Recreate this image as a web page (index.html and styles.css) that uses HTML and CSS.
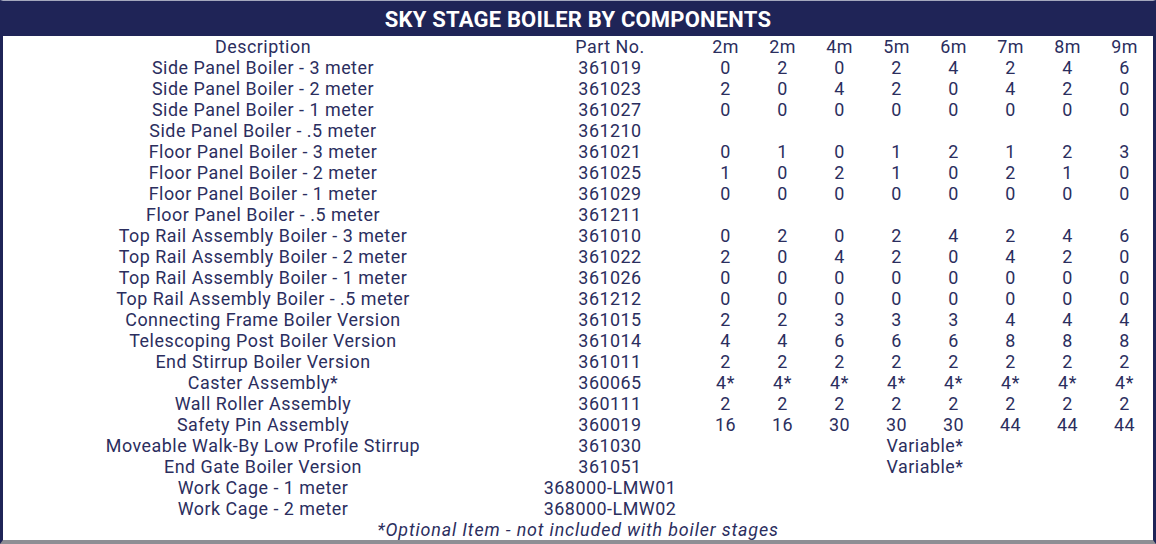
FILE: index.html
```html
<!DOCTYPE html>
<html>
<head>
<meta charset="utf-8">
<link rel="stylesheet" href="styles.css">
</head>
<body>
<div class="frame">
  <div class="title">SKY STAGE BOILER BY COMPONENTS</div>
  <table class="grid">
    <colgroup>
      <col class="c-desc"><col class="c-part">
      <col class="c-n"><col class="c-n"><col class="c-n"><col class="c-n"><col class="c-n"><col class="c-n"><col class="c-n"><col class="c-n">
    </colgroup>
    <tbody>
      <tr><td>Description</td><td>Part No.</td><td>2m</td><td>2m</td><td>4m</td><td>5m</td><td>6m</td><td>7m</td><td>8m</td><td>9m</td></tr>
      <tr><td>Side Panel Boiler - 3 meter</td><td>361019</td><td>0</td><td>2</td><td>0</td><td>2</td><td>4</td><td>2</td><td>4</td><td>6</td></tr>
      <tr><td>Side Panel Boiler - 2 meter</td><td>361023</td><td>2</td><td>0</td><td>4</td><td>2</td><td>0</td><td>4</td><td>2</td><td>0</td></tr>
      <tr><td>Side Panel Boiler - 1 meter</td><td>361027</td><td>0</td><td>0</td><td>0</td><td>0</td><td>0</td><td>0</td><td>0</td><td>0</td></tr>
      <tr><td>Side Panel Boiler - .5 meter</td><td>361210</td><td></td><td></td><td></td><td></td><td></td><td></td><td></td><td></td></tr>
      <tr><td>Floor Panel Boiler - 3 meter</td><td>361021</td><td>0</td><td>1</td><td>0</td><td>1</td><td>2</td><td>1</td><td>2</td><td>3</td></tr>
      <tr><td>Floor Panel Boiler - 2 meter</td><td>361025</td><td>1</td><td>0</td><td>2</td><td>1</td><td>0</td><td>2</td><td>1</td><td>0</td></tr>
      <tr><td>Floor Panel Boiler - 1 meter</td><td>361029</td><td>0</td><td>0</td><td>0</td><td>0</td><td>0</td><td>0</td><td>0</td><td>0</td></tr>
      <tr><td>Floor Panel Boiler - .5 meter</td><td>361211</td><td></td><td></td><td></td><td></td><td></td><td></td><td></td><td></td></tr>
      <tr><td>Top Rail Assembly Boiler - 3 meter</td><td>361010</td><td>0</td><td>2</td><td>0</td><td>2</td><td>4</td><td>2</td><td>4</td><td>6</td></tr>
      <tr><td>Top Rail Assembly Boiler - 2 meter</td><td>361022</td><td>2</td><td>0</td><td>4</td><td>2</td><td>0</td><td>4</td><td>2</td><td>0</td></tr>
      <tr><td>Top Rail Assembly Boiler - 1 meter</td><td>361026</td><td>0</td><td>0</td><td>0</td><td>0</td><td>0</td><td>0</td><td>0</td><td>0</td></tr>
      <tr><td>Top Rail Assembly Boiler - .5 meter</td><td>361212</td><td>0</td><td>0</td><td>0</td><td>0</td><td>0</td><td>0</td><td>0</td><td>0</td></tr>
      <tr><td>Connecting Frame Boiler Version</td><td>361015</td><td>2</td><td>2</td><td>3</td><td>3</td><td>3</td><td>4</td><td>4</td><td>4</td></tr>
      <tr><td>Telescoping Post Boiler Version</td><td>361014</td><td>4</td><td>4</td><td>6</td><td>6</td><td>6</td><td>8</td><td>8</td><td>8</td></tr>
      <tr><td>End Stirrup Boiler Version</td><td>361011</td><td>2</td><td>2</td><td>2</td><td>2</td><td>2</td><td>2</td><td>2</td><td>2</td></tr>
      <tr><td>Caster Assembly*</td><td>360065</td><td>4*</td><td>4*</td><td>4*</td><td>4*</td><td>4*</td><td>4*</td><td>4*</td><td>4*</td></tr>
      <tr><td>Wall Roller Assembly</td><td>360111</td><td>2</td><td>2</td><td>2</td><td>2</td><td>2</td><td>2</td><td>2</td><td>2</td></tr>
      <tr><td>Safety Pin Assembly</td><td>360019</td><td>16</td><td>16</td><td>30</td><td>30</td><td>30</td><td>44</td><td>44</td><td>44</td></tr>
      <tr><td>Moveable Walk-By Low Profile Stirrup</td><td>361030</td><td colspan="8">Variable*</td></tr>
      <tr><td>End Gate Boiler Version</td><td>361051</td><td colspan="8">Variable*</td></tr>
      <tr><td>Work Cage - 1 meter</td><td>368000-LMW01</td><td colspan="8"></td></tr>
      <tr><td>Work Cage - 2 meter</td><td>368000-LMW02</td><td colspan="8"></td></tr>
      <tr><td class="note" colspan="10">*Optional Item - not included with boiler stages</td></tr>
    </tbody>
  </table>
</div>
</body>
</html>
```

FILE: styles.css
```css
html, body {
  margin: 0;
  padding: 0;
  background: #ffffff;
}
body {
  width: 1156px;
  height: 544px;
  overflow: hidden;
  font-family: Roboto, "DejaVu Sans", sans-serif;
}
.frame {
  width: 1156px;
  height: 544px;
  box-sizing: border-box;
  border-top: 1px solid #a4a8bd;
  border-left: 3px solid #1f2457;
  border-right: 3px solid #1f2457;
  border-bottom: 4px solid #8e8e94;
  background: #ffffff;
}
.title {
  height: 35px;
  margin: 0 -3px;
  background: #1f2457;
  color: #ffffff;
  font-weight: bold;
  font-size: 22px;
  letter-spacing: 0.2px;
  line-height: 37px;
  text-align: center;
}
.grid {
  width: 1150px;
  border-collapse: collapse;
  table-layout: fixed;
  color: #2b2e5e;
  font-size: 17.9px;
  letter-spacing: 0.5px;
}
.c-desc { width: 520px; }
.c-part { width: 174px; }
.c-n { width: 57px; }
.grid td {
  padding: 0;
  height: 21px;
  line-height: 21px;
  text-align: center;
  white-space: nowrap;
}
.grid td.note {
  font-style: italic;
  letter-spacing: 0.85px;
}
```
